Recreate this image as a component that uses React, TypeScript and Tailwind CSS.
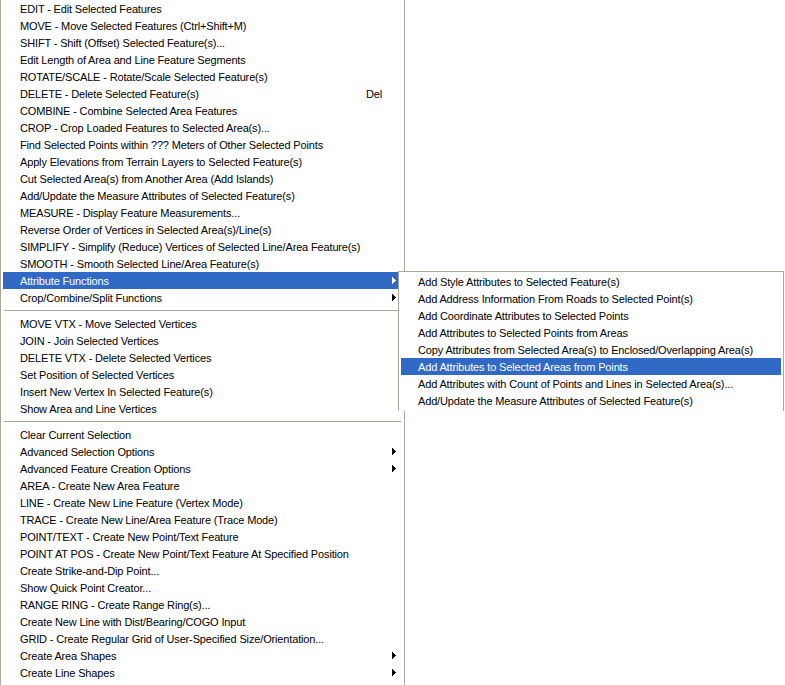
import React from "react";

type Item =
  | { sep: true }
  | { sep?: false; label: string; shortcut?: string; arrow?: boolean; hl?: boolean };

const mainItems: Item[] = [
  { label: "EDIT - Edit Selected Features" },
  { label: "MOVE - Move Selected Features (Ctrl+Shift+M)" },
  { label: "SHIFT - Shift (Offset) Selected Feature(s)..." },
  { label: "Edit Length of Area and Line Feature Segments" },
  { label: "ROTATE/SCALE - Rotate/Scale Selected Feature(s)" },
  { label: "DELETE - Delete Selected Feature(s)", shortcut: "Del" },
  { label: "COMBINE - Combine Selected Area Features" },
  { label: "CROP - Crop Loaded Features to Selected Area(s)..." },
  { label: "Find Selected Points within ??? Meters of Other Selected Points" },
  { label: "Apply Elevations from Terrain Layers to Selected Feature(s)" },
  { label: "Cut Selected Area(s) from Another Area (Add Islands)" },
  { label: "Add/Update the Measure Attributes of Selected Feature(s)" },
  { label: "MEASURE - Display Feature Measurements..." },
  { label: "Reverse Order of Vertices in Selected Area(s)/Line(s)" },
  { label: "SIMPLIFY - Simplify (Reduce) Vertices of Selected Line/Area Feature(s)" },
  { label: "SMOOTH - Smooth Selected Line/Area Feature(s)" },
  { label: "Attribute Functions", arrow: true, hl: true },
  { label: "Crop/Combine/Split Functions", arrow: true },
  { sep: true },
  { label: "MOVE VTX - Move Selected Vertices" },
  { label: "JOIN - Join Selected Vertices" },
  { label: "DELETE VTX - Delete Selected Vertices" },
  { label: "Set Position of Selected Vertices" },
  { label: "Insert New Vertex In Selected Feature(s)" },
  { label: "Show Area and Line Vertices" },
  { sep: true },
  { label: "Clear Current Selection" },
  { label: "Advanced Selection Options", arrow: true },
  { label: "Advanced Feature Creation Options", arrow: true },
  { label: "AREA - Create New Area Feature" },
  { label: "LINE - Create New Line Feature (Vertex Mode)" },
  { label: "TRACE - Create New Line/Area Feature (Trace Mode)" },
  { label: "POINT/TEXT - Create New Point/Text Feature" },
  { label: "POINT AT POS - Create New Point/Text Feature At Specified Position" },
  { label: "Create Strike-and-Dip Point..." },
  { label: "Show Quick Point Creator..." },
  { label: "RANGE RING - Create Range Ring(s)..." },
  { label: "Create New Line with Dist/Bearing/COGO Input" },
  { label: "GRID - Create Regular Grid of User-Specified Size/Orientation..." },
  { label: "Create Area Shapes", arrow: true },
  { label: "Create Line Shapes", arrow: true },
];

const subItems: { label: string; hl?: boolean }[] = [
  { label: "Add Style Attributes to Selected Feature(s)" },
  { label: "Add Address Information From Roads to Selected Point(s)" },
  { label: "Add Coordinate Attributes to Selected Points" },
  { label: "Add Attributes to Selected Points from Areas" },
  { label: "Copy Attributes from Selected Area(s) to Enclosed/Overlapping Area(s)" },
  { label: "Add Attributes to Selected Areas from Points", hl: true },
  { label: "Add Attributes with Count of Points and Lines in Selected Area(s)..." },
  { label: "Add/Update the Measure Attributes of Selected Feature(s)" },
];

function Arrow({ white }: { white?: boolean }) {
  return (
    <svg width="4" height="7" viewBox="0 0 4 7" shapeRendering="crispEdges" className="block">
      <path
        d="M0 0h1v1h1v1h1v1h1v1h-1v1h-1v1h-1v1h-1z"
        fill={white ? "#ffffff" : "#000000"}
      />
    </svg>
  );
}

export default function App() {
  return (
    <div className="relative w-[785px] h-[685px] overflow-hidden bg-white font-['Liberation_Sans',Arial,sans-serif] text-[11px] tracking-[-0.15px] text-black">
      {/* main menu */}
      <div className="w-[405px] h-[685px] border-x border-[#aca899] bg-white px-[2px]">
        {mainItems.map((it, i) =>
          it.sep ? (
            <div key={i} className="h-[9px] flex items-center pl-px pr-px">
              <div className="h-px w-full bg-[#aca899]" />
            </div>
          ) : (
            <div
              key={i}
              className={
                it.hl
                  ? "h-[17px] leading-[17px] flex items-center pl-[17px] pr-[6px] bg-[#316ac5] text-white"
                  : "h-[17px] leading-[17px] flex items-center pl-[17px] pr-[6px]"
              }
            >
              <span className="flex-1 whitespace-nowrap pt-px">{it.label}</span>
              {it.shortcut && <span className="whitespace-nowrap pt-px mr-[14px]">{it.shortcut}</span>}
              {it.arrow && <Arrow white={it.hl} />}
            </div>
          )
        )}
      </div>

      {/* submenu */}
      <div className="absolute left-[398px] top-[271px] w-[386px] border-x border-t border-[#aca899] bg-white px-[2px] pt-px pb-[2px]">
        {subItems.map((it, i) => (
          <div
            key={i}
            className={
              it.hl
                ? "h-[17px] leading-[17px] flex items-center pl-[17px] bg-[#316ac5] text-white"
                : "h-[17px] leading-[17px] flex items-center pl-[17px]"
            }
          >
            <span className="whitespace-nowrap pt-px">{it.label}</span>
          </div>
        ))}
      </div>
    </div>
  );
}
